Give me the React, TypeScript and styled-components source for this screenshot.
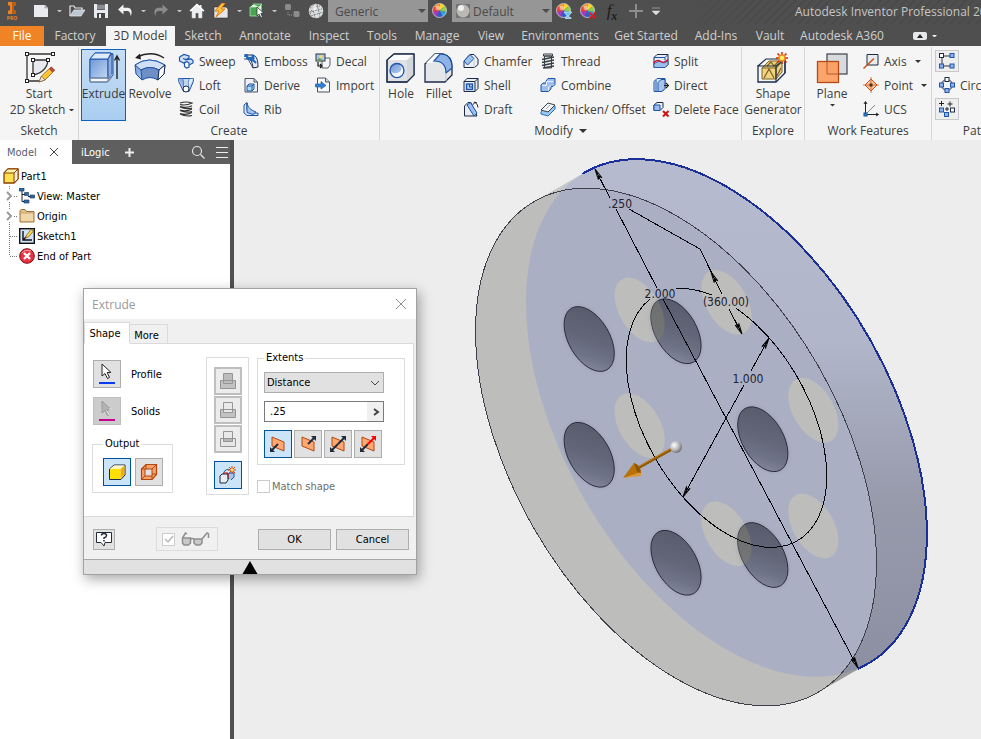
import React from "react";
import styled, { createGlobalStyle, css } from "styled-components";

const UI = `"Open Sans", "Noto Sans", sans-serif`;
const DLG = `"DejaVu Sans Condensed", "DejaVu Sans", sans-serif`;

const Global = createGlobalStyle`
  * { box-sizing: border-box; }
  html, body { margin: 0; height: 100%; overflow: hidden; }
  body { background: #ededed; font-family: ${UI}; font-size: 12px; color: #3c3c3c; }
  button, input, select { font: inherit; color: inherit; margin: 0; }
`;

/* ---------- icons ---------- */

const N = "#1b2b4a";
const B = "#1d55a8";
const art: Record<string, React.ReactNode> = {
  newDoc: (
    <g>
      <path d="M1 2h11l3 3v9H1z" fill="#e9ebee" />
      <path d="M12 2v3h3" fill="#b9bec6" stroke="#8b9098" strokeWidth=".6" />
    </g>
  ),
  open: (
    <g>
      <path d="M1 13V3h4l1 2h7v2" fill="none" stroke="#e6e6e6" strokeWidth="1.2" />
      <path d="M1 13 5 7h11l-4 6z" fill="#bcc7d4" stroke="#eee" strokeWidth=".7" />
    </g>
  ),
  save: (
    <g>
      <path d="M1 1h14v14H2l-1-1z" fill="#e8eaee" />
      <path d="M4 1h8v6H4z" fill="#5c6066" />
      <path d="M4 3h8M4 5h8" stroke="#cfd4da" strokeWidth=".8" />
      <path d="M4 10h8v5H4z" fill="#444" />
      <path d="M6 11h2v4H6z" fill="#eee" />
    </g>
  ),
  undo: (
    <path d="M1 6.500 6.500 1.500v3.200H10c3.500 0 5 2 4.500 6.300L13.500 13c0-3.500-1-5-4-5h-3v3.500z" fill="#f0f0f0" />
  ),
  redo: (
    <path d="M15 6.500 9.500 1.500v3.200H6c-3.500 0-5 2-4.500 6.300L2.500 13c0-3.500 1-5 4-5h3v3.500z" fill="#8a8a8a" />
  ),
  home: (
    <g>
      <path d="M8 1 15 8h-2v7H9.500v-5h-3v5H3V8H1z" fill="#eceef0" stroke="#cfd3d8" strokeWidth=".5" />
      <path d="M11.500 2v3" stroke="#eee" strokeWidth="2" />
      <path d="M1 8 8 1.500 15 8" fill="none" stroke="#fff" strokeWidth="1.300" />
    </g>
  ),
  update: (
    <g>
      <path d="M1 4h12l2 2v9H1z" fill="#e4e6ea" stroke="#333" strokeWidth=".6" />
      <path d="M9 0 2 8h4l-3 6 9-8H8l4-6z" fill="#ffc83c" stroke="#e8760c" />
    </g>
  ),
  pick: (
    <g>
      <path d="M1 4 4 1h9v9l-3 3H1z" fill="#dff0dc" stroke="#2c6e33" />
      <path d="M1 4h8v9H1zM4 1h9l-3 3" fill="#4aa350" stroke="#d9efd9" strokeWidth=".6" />
      <path d="M8 4v9l2-2 2 4 1.500-.7-1.700-4h3z" fill="#fff" stroke="#222" strokeWidth=".7" />
    </g>
  ),
  linked: (
    <g fill="#8b8b8b">
      <rect x="1" y="1" width="6" height="6" rx="1.500" />
      <rect x="9.500" y="8" width="6" height="6" rx="1.500" />
      <path d="M4 9v3h4" fill="none" stroke="#999" strokeDasharray="1 1" />
    </g>
  ),
  globe: (
    <g>
      <circle cx="8" cy="8" r="7.300" fill="#dcdfe0" />
      <path d="M2 5 12 3M1 9l13-3M3 13 15 9M4 2l3 13M9 1l3 13M6 1 2 12" stroke="#6b6f73" strokeWidth=".8" strokeDasharray="2 1" fill="none" />
      <circle cx="6" cy="5" r="2.500" fill="#fff" opacity=".6" />
    </g>
  ),
  plus: <path d="M8 1v14M1 8h14" stroke="#8d8d8d" strokeWidth="2" />,
  sweep: (
    <g stroke={B} strokeWidth="1.200" fill="#cfe0f6">
      <path d="M1.500 4 6 1.500l5 1.500v2L7 7l6-1 2 1.500v2.500l-4 2" />
      <path d="M1.500 4v4l4 2 2-1M5 5.500l3 1" />
      <path d="M6.500 10 9 8.500l2 1.500v4L8.500 15l-2-1.500z" fill="#fff" />
    </g>
  ),
  loft: (
    <g>
      <path d="M.7 1.500h14.600v3L11 14.500H5.500L.7 4.500z" fill="#c4d8f2" stroke={B} />
      <path d="M.7 1.500h4l1 4-.5 5" fill="#8fb0e0" stroke={B} strokeWidth=".6" />
      <path d="M15.300 1.500h-4l-1 4 .5 5" fill="#e4eefb" stroke={B} strokeWidth=".6" />
      <circle cx="8" cy="12" r="3" fill="#fff" stroke={N} />
    </g>
  ),
  coil: (
    <g fill="none" stroke="#333" strokeWidth="1.200">
      <path d="M2 2q6-2 12 0Q8 5 2 3.500M2 5.500q6 2 12-.8M2 6q6 2.500 12 1M2 9q6 2 12-1M2 9.500q6 2.500 12 1M2 12.500q6 2 12-1M2 13q6 3 12 1.500" />
    </g>
  ),
  emboss: (
    <g>
      <path d="M4 2h6c4 1 5 6 5 12l-5 1C9 8 8 6 4 6z" fill="#e4ecf7" stroke={N} />
      <path d="M1 6h4l5 9" fill="none" stroke={N} strokeWidth=".8" />
      <path d="M1.500 1h3l1 3h3V2h3v4L9 9 6 7H4L3 4H1z" fill="#2366bd" />
      <path d="M10 7l3 3" stroke="#2366bd" strokeWidth="2" />
    </g>
  ),
  derive: (
    <g>
      <path d="M2 1.500h9l3.500 3.500v10H2z" fill="#eef0f3" stroke="#4b5563" />
      <path d="M11 1.500V5h3.500" fill="none" stroke="#4b5563" />
      <path d="M4 9l2-2h5v5l-2 2H4z" fill="#b5dcf8" stroke={B} />
      <path d="M4 9h5v5M9 9l2-2" fill="none" stroke={B} />
    </g>
  ),
  rib: (
    <g>
      <path d="M1 4 4 1.500V9l5 3h6v2.500H4L1 12z" fill="#dbe7f8" stroke={B} />
      <path d="M4 2c1 5 4 7 9 9l-3 2.500-6-2z" fill="#a6c3ec" stroke={B} />
    </g>
  ),
  decal: (
    <g>
      <path d="M7 8l3-3h5v7l-2 3H7z" fill="#f4f5f7" stroke="#555e6b" />
      <rect x="1" y="1" width="9" height="7" fill="#a8c8ef" stroke="#334" />
      <path d="M1.500 7.500 4 5l2 1 3 1.500z" fill="#6ea34a" />
      <circle cx="6" cy="3.500" r="1.500" fill="#f4df48" />
      <path d="M3 9v4h3M5 11l2 2-2 2" fill="none" stroke="#111" strokeWidth="1.200" />
    </g>
  ),
  import: (
    <g>
      <path d="M2.500 1h8l4 4v10h-12z" fill="#f7f8fa" stroke="#4b5563" />
      <path d="M10.500 1v4h4" fill="#cbd2db" stroke="#4b5563" />
      <path d="M.5 7H6V4.500L11 8.500 6 12V10H.5z" fill="#2f83d3" stroke="#174e91" strokeWidth=".6" />
    </g>
  ),
  chamfer: (
    <g>
      <path d="M1 8 7 1.500h4L15 6v5.500L11.500 14.500H1z" fill="#eceef1" stroke={N} />
      <path d="M1 8 7 1.500l4 4L4.500 12z" fill="#9ec0ec" stroke={B} />
      <path d="M11 5.500v9" stroke="#c7ccd4" />
    </g>
  ),
  shell: (
    <g>
      <path d="M1 4.500 4 1.500h11v10l-3 3H1z" fill="#e9ecf1" stroke={N} />
      <path d="M1 4.500h11v10M12 4.500l3-3" fill="none" stroke={N} />
      <rect x="3.500" y="7" width="6" height="5.500" fill="#a9c6f0" stroke={B} strokeWidth="1.300" />
      <path d="M6.500 7v3h3" fill="none" stroke={B} />
    </g>
  ),
  draft: (
    <g>
      <path d="M1.500 5 5 1.500h3l6 13.500H1.500z" fill="#e9edf3" stroke={N} />
      <path d="M4 4 7.500 1.500 14 12l-3 3z" fill="#9dbdec" stroke={B} />
      <path d="M12 1.500q3 1.500 3 5M10.500 3.500l1-2.500 2.500 1" fill="none" stroke="#222" />
    </g>
  ),
  thread: (
    <g>
      <path d="M3.500 1h9v2h-9zM4.500 3h7v12h-7z" fill="#eceef0" stroke="#3a3f46" />
      <path d="M2 6.500 14 4M2 9.500 14 7M2 12.500 14 10M3 15l11-2" stroke="#3a3f46" strokeWidth="1.300" />
    </g>
  ),
  combine: (
    <g stroke={B}>
      <path d="M6 4l2-2.500h7v6L13 9.500h-2V12l-2.500 2.500H1V8l2-2h3z" fill="#9dbdec" />
      <path d="M2 8.500h4.500V4.500H13M8.500 13.500V10l2.500-1" fill="none" stroke="#e6effb" />
    </g>
  ),
  thicken: (
    <g>
      <path d="M1 11 8 3l7 2v3L8 15l-7-2z" fill="#9cc9f1" stroke="#2a6cb8" />
      <path d="M1 9 8 2l7 2-7 7z" fill="#f3f4f5" stroke="#3a3f46" />
      <path d="M6 8 10 4" stroke="#aab" />
    </g>
  ),
  split: (
    <g>
      <path d="M1 4.500 4 1.500h11v10l-3 3H1z" fill="#e8ecf2" stroke={N} />
      <path d="M1 4.500h11l3-3M12 4.500v3" fill="none" stroke={B} />
      <path d="M1 10.500V14.500h11l3-3V8l-4 2-4-2z" fill="#9dbdea" stroke={B} strokeWidth=".8" />
      <path d="M.5 10q3.500-4 7-1.500t7.500-2" fill="none" stroke="#c8102e" strokeWidth="1.300" />
    </g>
  ),
  direct: (
    <g>
      <path d="M1 4.500 4 1.500h8v10l-3 3H1z" fill="#dbe6f6" stroke={B} />
      <path d="M5 5.500 8 2.500h4v9l-3 3H5z" fill="#a6c3ec" stroke={B} />
      <path d="M3 3v11" stroke={B} />
      <path d="M11 8.500h4M13 6l2.500 2.500L13 11" fill="none" stroke="#222" strokeWidth="1.200" />
    </g>
  ),
  deleteFace: (
    <g>
      <path d="M1 4 4 1.500h6v5L7 9.500H1z" fill="#eef1f5" stroke={N} />
      <path d="M1 4h6v5.500H1z" fill="#9dbdec" stroke={B} />
      <path d="m10 10 5.500 5.500M15.500 10 10 15.500" stroke="#cf1212" strokeWidth="2" />
    </g>
  ),
  axis: (
    <g>
      <path d="M4 1.500h11V12H4z" fill="#e9ebee" stroke={N} />
      <path d="M.5 15.500 11 5.500" stroke="#c8541c" strokeWidth="1.500" />
    </g>
  ),
  point: (
    <g>
      <path d="m8 2 6 6-6 6-6-6z" fill="#ffc9a0" stroke="#c8541c" />
      <path d="M8 0v16M0 8h16" stroke="#c8541c" strokeWidth=".8" />
      <rect x="6.500" y="6.500" width="3" height="3" fill="#5a2a12" />
    </g>
  ),
  ucs: (
    <g fill="none">
      <path d="M2.500 1v12.500H15" stroke="#222" />
      <path d="M1 3l1.500-2.500L4 3M13 12l2.500 1.500L13 15" stroke="#222" />
      <path d="M3 13 12 4" stroke="#888" />
      <rect x="1" y="12" width="3" height="3" fill="#2a8de0" stroke="#124f98" />
    </g>
  ),
  patRect: (
    <g>
      <path d="M3 3h10M3 3v10h10" fill="none" stroke="#333" />
      <rect x=".5" y=".5" width="4" height="4" fill="#fff" stroke={N} />
      {[[11, 0.5], [0.5, 11], [11, 11]].map(([x, y]) => (
        <rect key={`${x}${y}`} x={x} y={y} width="4" height="4" fill="#8db4ee" stroke={B} />
      ))}
    </g>
  ),
  patCirc: (
    <g>
      <circle cx="8" cy="8" r="5.500" fill="none" stroke="#333" />
      <rect x="6" y=".5" width="4" height="4" fill="#fff" stroke={N} />
      {[[0.5, 6], [11.500, 6], [6, 11.500]].map(([x, y]) => (
        <rect key={`${x}${y}`} x={x} y={y} width="4" height="4" fill="#8db4ee" stroke={B} />
      ))}
    </g>
  ),
  patSketch: (
    <g>
      <path d="M2.500 0v5M0 2.500h5M11 .5v5M8.500 3h5M8 6v4M6 8h4" stroke="#222" />
      <rect x=".5" y="7" width="4" height="4" fill="#8db4ee" stroke={B} />
      <rect x="11.500" y="7" width="4" height="4" fill="#fff" stroke={N} />
      <rect x="5.500" y="11.500" width="4" height="4" fill="#8db4ee" stroke={B} />
    </g>
  ),
  part: (
    <g>
      <path d="M1 5 5 1h10v10l-4 4H1z" fill="#ffe24d" stroke="#8a3f06" strokeWidth="1.300" />
      <path d="M1 5h10l4-4H5z" fill="#fff3a6" stroke="#8a3f06" />
      <path d="M11 5v10l4-4V1z" fill="#f5ead0" stroke="#8a3f06" />
    </g>
  ),
  views: (
    <g>
      <path d="M3 3v10.500h4M3 6.500h5M9 8.500h6" fill="none" stroke="#222" />
      <path d="M0 0h5v3H0zM5 12h5v3H5zM5.500 4.500h4v3h-4zM11 7h4.500v3H11z" fill="#2a6cb0" stroke="#16324f" strokeWidth=".6" />
    </g>
  ),
  folder: (
    <g>
      <path d="M1 13V2.500L2.500 1.500H6L7.500 3.500H15V14H1z" fill="#e3c088" stroke="#9c7238" />
      <path d="M1.500 5h13v8.500h-13z" fill="#f0d7aa" stroke="#b68c50" strokeWidth=".6" />
    </g>
  ),
  sketch: (
    <g>
      <rect x=".7" y=".7" width="14.600" height="14.600" fill="#cfe3fa" stroke="#111" strokeWidth="1.400" />
      <path d="M4 3v9h9M4 12l5-5" fill="none" stroke="#111" strokeWidth="1.400" />
      <path d="m7 8 5-6.500L14.500 3 9.500 9l-3 1z" fill="#ffd84d" stroke="#775009" strokeWidth=".7" />
    </g>
  ),
  end: (
    <g>
      <circle cx="8" cy="8" r="7.300" fill="#ea3340" stroke="#7d0e16" />
      <path d="m5 5 6 6M11 5l-6 6" stroke="#fff" strokeWidth="2.300" />
      <path d="M3 5q3-4 9-2" stroke="#f9a9ae" fill="none" />
    </g>
  ),
  search: (
    <g fill="none" stroke="#e4e4e4" strokeWidth="1.200">
      <circle cx="7" cy="7" r="4.500" />
      <path d="m10.500 10.500 4 4" />
    </g>
  ),
  menu: <path d="M2 3.500h12M2 8.500h12M2 13.500h12" stroke="#eee" />,
};

const Svg16 = styled.svg<{ $s?: number }>`
  display: block;
  flex: none;
  width: ${(p) => p.$s ?? 16}px;
  height: ${(p) => p.$s ?? 16}px;
`;
const Icon = ({ name, size }: { name: string; size?: number }) => (
  <Svg16 $s={size} viewBox="0 0 16 16" aria-hidden="true">
    {art[name]}
  </Svg16>
);

const Wheel = ({ badge }: { badge?: "down" | "x" }) => (
  <Svg16 viewBox="0 0 16 16" aria-hidden="true">
    {["#f9d423", "#8ed04b", "#2fa6d8", "#3559c7", "#a23bc0", "#ee3d3d", "#f58a2a"].map((c, i) => {
      const p = (k: number) => {
        const a = ((k * 360) / 7 - 90) * (Math.PI / 180);
        return `${7.5 + 7 * Math.cos(a)} ${7.5 + 7 * Math.sin(a)}`;
      };
      return <path key={c} d={`M7.500 7.500L${p(i)}A7 7 0 0 1 ${p(i + 1)}z`} fill={c} />;
    })}
    <circle cx="7.500" cy="7.500" r="7" fill="none" stroke="#e8e8e8" strokeWidth=".7" />
    <circle cx="6" cy="5" r="2.500" fill="#fff" opacity=".45" />
    {badge === "down" && <path d="M8 9h8l-3 3.500v2h2v1.500H9.500v-1.500H11v-2z" fill="#6fc3ea" stroke="#fff" strokeWidth=".5" />}
    {badge === "x" && <path d="m9.500 9.500 6 6M15.500 9.500l-6 6" stroke="#e01b1b" strokeWidth="1.800" />}
  </Svg16>
);

const big: Record<string, React.ReactNode> = {
  start: (
    <g>
      <path d="M30 2H4v27h12" fill="none" stroke="#333" strokeWidth="1.300" />
      <path d="M10 8h15q-1 12-15 15z" fill="#e8eaee" stroke="#333" strokeWidth="1.300" />
      {[[4, 2], [30, 2], [4, 29], [10, 8], [25, 8], [10, 23]].map(([x, y]) => (
        <rect key={`${x}-${y}`} x={x - 1.5} y={y - 1.5} width="3" height="3" fill="#fff" stroke="#222" />
      ))}
      <path d="m16 30 2.500-6L28 15l3.500 3.500L22 28z" fill="#ffc532" stroke="#8a5a10" strokeWidth=".8" />
      <path d="m26 17 2.500-2.500 3.500 3.500-2.500 2.500z" fill="#b7483e" />
      <path d="m16 30 2.500-6 3.500 4z" fill="#fbe4bb" stroke="#555" strokeWidth=".6" />
    </g>
  ),
  extrude: (
    <g>
      <path d="M2 26V7l5-6h15l3 1v21l-6 7H2z" fill="#f5f7fa" stroke={B} />
      <path d="M2 7h18v19H2z" fill="url(#gBlue)" stroke={B} />
      <path d="M2 7 7 1h16l-3 6z" fill="#dfeafa" stroke={B} />
      <path d="M20 7l4-6v21l-4 5z" fill="#8eaede" stroke={B} />
      <path d="M2 26h18l4-4M2 26v4h18v-4M20 30l4-5" fill="none" stroke="#8a929e" />
      <path d="M29 27V5M26.500 8.500 29 4l2.500 4.500" fill="none" stroke="#222" strokeWidth="1.400" />
    </g>
  ),
  revolve: (
    <g>
      <path d="M1 13q14-10 30 0l-1 9-6 6-4-3h-9l-3 3-6-6z" fill="url(#gBlue)" stroke={B} />
      <path d="M1 13q14-10 30 0l-6 5q-9-5-18 0z" fill="#cfe0f7" stroke={B} />
      <path d="M7 18q9-5 18 0l-1 10q-8-5-16 0z" fill="#6d8fc6" stroke={B} />
      <path d="m25 18 6-5-1 9-6 6z" fill="#fff" stroke={N} />
      <path d="M30 6Q18-2 3 5" fill="none" stroke="#222" strokeWidth="1.400" />
      <path d="M6 1.500 1 6l6 1.500z" fill="#222" />
    </g>
  ),
  hole: (
    <g>
      <path d="M2 8 9 2h20v21l-7 7H2z" fill="#dfe1e5" stroke={N} />
      <path d="M2 8 9 2h20l-7 6z" fill="#fbfbfc" />
      <path d="M22 8l7-6v21l-7 7z" fill="#d3d6db" />
      <path d="M2 8 9 2h20v21l-7 7H2z" fill="none" stroke={N} strokeWidth="1.300" />
      <circle cx="12" cy="18.500" r="7" fill="url(#gBlue)" stroke={B} strokeWidth="1.300" />
      <path d="M15 13q4 6-3 8-5 1-6-3 1 7 6 7 6-1 6-6 0-4-3-6z" fill="#f3f6fb" />
    </g>
  ),
  fillet: (
    <g>
      <path d="M2 12 12 2h8q9 2 9 13v8l-7 7H2z" fill="#e4e6e9" stroke={N} strokeWidth="1.300" />
      <path d="M3 11 12 2h5L9 11z" fill="#fbfbfc" />
      <path d="M11 9 17 2q12 0 12 14l-6 5Q23 9 11 9z" fill="#8fb3e6" stroke={B} strokeWidth="1.200" />
      <path d="M23 21v8" stroke="#c5c9cf" />
    </g>
  ),
  generator: (
    <g>
      <path d="M1 13v17h18l9-9V8" fill="none" stroke={N} strokeWidth="1.300" />
      <path d="M5 16l7-7h13v11l-6 7H5z" fill="#f0d282" stroke="#7a6220" />
      <path d="M5 16h14v11M19 16l6-7M7 26l5-9 5 9M10 14l4-4 3 4 4-4M20 24l4-8" fill="none" stroke="#7a6220" strokeWidth="1.200" />
      <path d="M1 14 9 7h19M1 14h18v16M19 14l9-7v14" fill="none" stroke={N} strokeWidth="1.100" />
      <g stroke="#cf2a10" strokeWidth="1.500">
        <path d="M25 0v12M19 6h12M20.500 1.500l9 9M29.500 1.500l-9 9" />
        <circle cx="25" cy="6" r="3" fill="#fff06a" stroke="#f08a1c" />
      </g>
    </g>
  ),
  plane: (
    <g>
      <rect x="11" y="2" width="20" height="20" fill="#d7dade" stroke="#3d434b" strokeWidth="1.200" />
      <rect x="1.500" y="9.500" width="21" height="21" fill="#ff9752" fillOpacity=".85" stroke="#b54a14" strokeWidth="1.300" />
      <path d="M11 10v12h11" fill="none" stroke="#c66a38" />
    </g>
  ),
};
const BigIcon = ({ name }: { name: string }) => (
  <Svg16 $s={32} viewBox="0 0 32 32" aria-hidden="true">
    <defs>
      <linearGradient id="gBlue" x1="0" y1="0" x2="1" y2="1">
        <stop offset="0" stopColor="#6f97d6" />
        <stop offset="1" stopColor="#c3d7f4" />
      </linearGradient>
    </defs>
    {big[name]}
  </Svg16>
);

const CaretSvg = styled.svg<{ $w: number }>`
  display: block;
  flex: none;
  width: ${(p) => p.$w}px;
  height: ${(p) => p.$w / 2}px;
`;
const Caret = ({ w = 6, color = "#333" }: { w?: number; color?: string }) => (
  <CaretSvg $w={w} viewBox="0 0 8 4" aria-hidden="true">
    <path d="M0 0h8L4 4z" fill={color} />
  </CaretSvg>
);

/* ---------- frame ---------- */

const Page = styled.div`
  display: flex;
  flex-direction: column;
  height: 100vh;
  overflow: hidden;
`;

const TitleBar = styled.header`
  display: flex;
  align-items: center;
  flex: none;
  height: 24px;
  padding-bottom: 2px;
  white-space: nowrap;
  overflow: hidden;
  background:
    linear-gradient(90deg, #4f4f4f 680px, transparent 760px),
    repeating-linear-gradient(135deg, #4f4f4f 0 4px, #4a4a4a 4px 6px);
`;
const Logo = styled.div`
  display: flex;
  flex: none;
  width: 29px;
  padding-left: 3px;
`;
const QatButton = styled.button<{ $w?: number }>`
  display: flex;
  align-items: center;
  justify-content: center;
  flex: none;
  width: ${(p) => p.$w ?? 24}px;
  height: 22px;
  padding: 0;
  border: 0;
  background: none;
`;
const Fx = styled.span`
  font: italic 17px/20px "Liberation Serif", serif;
  color: #1c1c1c;
  sub { font-size: 12px; line-height: 1px; font-weight: bold; }
`;
const Combo = styled.label`
  display: grid;
  align-items: center;
  flex: none;
  width: 100px;
  height: 22px;
  background: #969696;
  > * { grid-area: 1 / 1; }
  > svg:last-child { justify-self: end; margin-right: 2px; }
  > svg:first-child { margin-left: 4px; z-index: 1; }
`;
const ComboSelect = styled.select<{ $indent?: boolean }>`
  appearance: none;
  width: 100%;
  height: 22px;
  padding: 0 0 0 ${(p) => (p.$indent ? 21 : 7)}px;
  border: 0;
  background: none;
  color: #4a4a4a;
`;
const AppTitle = styled.h1`
  flex: none;
  margin: 0 0 0 131px;
  padding-top: 2px;
  font-size: 12px;
  line-height: 18px;
  font-weight: 400;
  color: #c6c6c6;
`;

const TabBar = styled.nav`
  display: flex;
  align-items: stretch;
  flex: none;
  height: 22px;
  padding-top: 2px;
  background: #4f4f4f;
  white-space: nowrap;
`;
const RibbonTab = styled.button<{ $w: number; $kind?: "file" | "active" }>`
  flex: none;
  width: ${(p) => p.$w}px;
  padding: 0;
  border: 0;
  background: none;
  line-height: 20px;
  color: #d0d0d0;
  ${(p) => p.$kind === "file" && css`background: #f08326; color: #fff;`}
  ${(p) => p.$kind === "active" && css`background: #f5f5f5; color: #3c3c3c;`}
`;
const Minimise = styled.button`
  display: flex;
  align-items: center;
  gap: 5px;
  margin-left: 22px;
  padding: 0;
  border: 0;
  background: none;
`;

/* ---------- ribbon ---------- */

const Ribbon = styled.div`
  display: flex;
  flex: none;
  height: 94px;
  padding-top: 1px;
  overflow: hidden;
  background: #f5f5f5;
`;
const Panel = styled.section<{ $w: number }>`
  display: flex;
  flex-direction: column;
  flex: none;
  width: ${(p) => p.$w}px;
  padding-top: 2px;
  border-right: 1px solid #d6d6d6;
`;
const Tools = styled.div<{ $pad?: number }>`
  display: flex;
  height: 72px;
  padding-left: ${(p) => p.$pad ?? 2}px;
`;
const PanelName = styled.div`
  display: flex;
  align-items: center;
  justify-content: center;
  gap: 6px;
  height: 19px;
`;
const BigButton = styled.button<{ $w: number; $on?: boolean }>`
  display: flex;
  flex-direction: column;
  align-items: center;
  flex: none;
  width: ${(p) => p.$w}px;
  height: 72px;
  padding: 2px 0 0;
  border: 1px solid ${(p) => (p.$on ? "#0a62c4" : "transparent")};
  background: ${(p) => (p.$on ? "linear-gradient(#c6ddf5, #aacef1)" : "none")};
  line-height: 16px;
  white-space: nowrap;
  > svg:first-child { margin-bottom: 2px; }
  > svg:last-child:not(:first-child) { margin-top: 2px; }
`;
const SplitRow = styled.span`
  display: flex;
  align-items: center;
  gap: 4px;
  margin-right: -6px;
`;
const Col = styled.div<{ $w: number }>`
  flex: none;
  width: ${(p) => p.$w}px;
`;
const ToolButton = styled.button`
  display: flex;
  align-items: center;
  gap: 5px;
  height: 24px;
  padding: 0;
  border: 0;
  background: none;
  white-space: nowrap;
  > svg:last-child:not(:first-child) { margin-left: 3px; }
`;
const PatternButton = styled(ToolButton)<{ $boxed?: boolean }>`
  height: ${(p) => (p.$boxed ? 22 : 24)}px;
  margin: ${(p) => (p.$boxed ? "1px 0" : "0")};
  padding: 0 3px;
  border: 1px solid ${(p) => (p.$boxed ? "#c8c8c8" : "transparent")};
  background: ${(p) => (p.$boxed ? "#eeeeee" : "none")};
`;
const Tool = ({ icon, label, caret }: { icon: string; label: string; caret?: boolean }) => (
  <ToolButton>
    <Icon name={icon} />
    {label}
    {caret && <Caret />}
  </ToolButton>
);

/* ---------- browser ---------- */

const Work = styled.main`
  display: flex;
  flex: 1;
  min-height: 0;
`;
const Browser = styled.aside`
  flex: none;
  width: 234px;
  border-right: 4px solid #505050;
  background: #fff;
  font-family: ${DLG};
  font-size: 11px;
  color: #000;
`;
const BrowserTabs = styled.div`
  display: flex;
  align-items: center;
  height: 24px;
  background: #5f5f5f;
  color: #fff;
`;
const ModelTab = styled.div`
  display: flex;
  align-items: center;
  justify-content: space-between;
  flex: none;
  width: 72px;
  height: 24px;
  padding: 0 13px 0 7px;
  background: #fff;
  color: #5a5f70;
`;
const PlainButton = styled.button<{ $ml?: number }>`
  display: flex;
  align-items: center;
  flex: none;
  margin-left: ${(p) => p.$ml ?? 0}px;
  padding: 0;
  border: 0;
  background: none;
`;
const Tree = styled.ul`
  margin: 0;
  padding: 2px 0 0 3px;
  list-style: none;
`;
const TreeRow = styled.li<{ $child?: boolean; $last?: boolean }>`
  display: flex;
  align-items: center;
  gap: 2px;
  height: 20px;
`;
const BranchSvg = styled.svg`
  display: block;
  width: 14px;
  height: 20px;
`;
const Branch = ({ open, last }: { open?: boolean; last?: boolean }) => (
  <BranchSvg viewBox="0 0 14 20" aria-hidden="true">
    <path d={last ? "M6.500 0v10" : "M6.500 0v20"} stroke="#777" strokeDasharray="1 1" />
    <path d="M7 10.500h7" stroke="#777" strokeDasharray="1 1" />
    {open && (
      <g>
        <path d="M2 4h8v12H2z" fill="#fff" />
        <path d="m4 6 4 4-4 4" fill="none" stroke="#9a9a9a" strokeWidth="2" />
      </g>
    )}
  </BranchSvg>
);

/* ---------- model view ---------- */

const View = styled.div`
  flex: 1;
  min-width: 0;
  background: #ededed;
`;
const Scene = styled.svg`
  display: block;
  width: 100%;
  height: 100%;
  text { font: 12px ${DLG}; fill: #1d2030; text-anchor: middle; }
`;

type Pt = [number, number];
const R = 231.5;
const FRONT: Pt = [676, 447];
const BACK: Pt = [726.5, 418];
const iso = (c: Pt, r: number, deg: number): Pt => {
  const t = (deg * Math.PI) / 180;
  return [c[0] + 0.866 * r * Math.sin(t), c[1] + 0.5 * r * Math.sin(t) - r * Math.cos(t)];
};
const arc = (c: Pt, r: number, a: number, b: number) => {
  const p = iso(c, r, a);
  const q = iso(c, r, b);
  return `M${p}A${r * 1.2247} ${r * 0.7071} 60 ${Math.abs(b - a) > 180 ? 1 : 0} ${b > a ? 1 : 0} ${q}`;
};
const Disc = ({ c, r, ...rest }: { c: Pt; r: number } & React.SVGProps<SVGEllipseElement>) => (
  <ellipse rx={r * 1.2247} ry={r * 0.7071} transform={`translate(${c}) rotate(60)`} {...rest} />
);
const ANGLES = [0, 60, 120, 180, 240, 300];

const Head = ({ at, deg }: { at: Pt; deg: number }) => (
  <path d="M0 0-11 2-8 0-11-2z" transform={`translate(${at}) rotate(${deg})`} fill="none" stroke="#000" />
);

const Model = () => (
  <Scene role="img" aria-label="Extruded disc with six holes">
    <defs>
      <linearGradient id="rim" x1="0" y1="0" x2="0" y2="1">
        <stop offset="0" stopColor="#b5bacf" />
        <stop offset=".35" stopColor="#b1b6ca" />
        <stop offset=".65" stopColor="#979bac" />
        <stop offset="1" stopColor="#8b8fa1" />
      </linearGradient>
      <linearGradient id="side" x1="0" y1="0" x2="0" y2="1">
        <stop offset="0" stopColor="#c8c8c7" />
        <stop offset="1" stopColor="#9b9b99" />
      </linearGradient>
      <linearGradient id="bore" gradientUnits="userSpaceOnUse" x1="8" y1="-26" x2="-10" y2="30">
        <stop offset="0" stopColor="#585c6d" />
        <stop offset=".45" stopColor="#626678" />
        <stop offset=".75" stopColor="#6f7387" />
        <stop offset="1" stopColor="#868aa0" />
      </linearGradient>
      <filter id="soft" x="-20%" y="-20%" width="140%" height="140%">
        <feGaussianBlur stdDeviation="2" />
      </filter>
      <radialGradient id="ball" cx=".35" cy=".35" r=".7">
        <stop offset="0" stopColor="#fff" />
        <stop offset=".6" stopColor="#b4b4b8" />
        <stop offset="1" stopColor="#6c6c70" />
      </radialGradient>
      <clipPath id="inBack"><Disc c={BACK} r={R} /></clipPath>
      <clipPath id="inHoles">
        {ANGLES.map((a) => <Disc key={a} c={iso(FRONT, R / 2, a)} r={29} />)}
      </clipPath>
    </defs>
    <g transform="translate(-234 -140)">
      <path
        d={`M${iso(FRONT, R, -45)}L${iso(BACK, R, -45)}L${iso(BACK, R, 135)}L${iso(FRONT, R, 135)}z`}
        fill="url(#side)"
      />
      <path d={`${arc(BACK, R, -45, 135)}${arc(BACK, R, 135, 315)}`} fill="url(#rim)" />
      <Disc c={FRONT} r={R} fill="#bdbdbb" />
      <g clipPath="url(#inBack)">
        <Disc c={FRONT} r={R} fill="#abafc3" />
      </g>
      {ANGLES.map((a) => <Disc key={a} c={iso(BACK, R / 2, a)} r={29} fill="#bdbdbb" />)}
      {ANGLES.map((a) => {
        const [x, y] = iso(FRONT, R / 2, a);
        return (
          <g key={a} transform={`translate(${x} ${y})`}>
            <Disc c={[0, 0]} r={29} fill="#8b8fa4" opacity=".7" filter="url(#soft)" />
            <path d={`${arc([0, 0], 29, -45, 135)}${arc([0, 0], 29, 135, 315)}`} fill="url(#bore)" stroke="#2a2d3c" />
          </g>
        );
      })}
      <g clipPath="url(#inHoles)">
        {ANGLES.map((a) => <Disc key={a} c={iso(BACK, R / 2, a)} r={29} fill="#7a7a70" fillOpacity=".65" />)}
      </g>
      <Disc c={FRONT} r={R} fill="none" stroke="#3d3f49" shapeRendering="crispEdges" />
      <path d={arc(BACK, R, -46, 139)} fill="none" stroke="#1a2f9c" strokeWidth="2" shapeRendering="crispEdges" />
      <g fill="none" stroke="#05060c" shapeRendering="crispEdges">
        <path d={arc(BACK, R / 2, 5.5, 310)} />
        <path d={arc(BACK, R / 2, -30, -8)} />
        <path d="M595 169l15 29M616 209l41 79M663 299 858 668" />
        <path d="M629 209l71 40 22 45M729 309l13 25" />
        <path d="M769 338 751 371M744 385 683 497" />
      </g>
      <Head at={[595, 169]} deg={-118} />
      <Head at={[858, 668]} deg={62} />
      <Head at={[711, 272]} deg={-117} />
      <Head at={[742, 334]} deg={63} />
      <Head at={[769, 338]} deg={-61} />
      <Head at={[683, 497]} deg={119} />
      <path d="M672 449 638 468" stroke="#8f5604" strokeWidth="3" />
      <path d="M672 448 638 467" stroke="#c8800f" />
      <path d="M623 478 634 463Q641 465 641 474z" fill="#b97205" />
      <path d="m623 478 18-6v4z" fill="#d9983a" />
      <path d="M634 463q6 2 7 10l-4-1z" fill="#8f5604" />
      <circle cx="676" cy="447" r="6" fill="url(#ball)" />
      <text x="620" y="208">.250</text>
      <text x="660" y="298">2.000</text>
      <text x="726" y="306">(360.00)</text>
      <text x="748" y="383">1.000</text>
    </g>
  </Scene>
);

/* ---------- extrude dialog ---------- */

const Dialog = styled.section`
  position: absolute;
  left: 83px;
  top: 288px;
  width: 334px;
  border: 1px solid #a2a2a2;
  background: #f0f0f0;
  box-shadow: 2px 4px 12px rgba(0, 0, 0, 0.35);
  font-family: ${DLG};
  font-size: 11px;
  color: #000;
`;
const DialogTitle = styled.header`
  display: flex;
  align-items: center;
  justify-content: space-between;
  height: 30px;
  padding: 0 9px 0 8px;
  background: #fff;
  font-family: ${UI};
  font-size: 12px;
  color: #9a9a9a;
`;
const DialogTabs = styled.div`
  display: flex;
  align-items: flex-end;
  height: 25px;
  margin-bottom: -1px;
`;
const DialogTab = styled.button<{ $on?: boolean }>`
  height: ${(p) => (p.$on ? 22 : 20)}px;
  width: ${(p) => (p.$on ? 46 : 38)}px;
  padding: ${(p) => (p.$on ? "0" : "2px")} 4px 0 0;
  border: 1px solid #dadada;
  border-left-width: ${(p) => (p.$on ? 1 : 0)}px;
  border-bottom-color: ${(p) => (p.$on ? "#fff" : "#dadada")};
  background: ${(p) => (p.$on ? "#fff" : "#f0f0f0")};
`;
const Sheet = styled.div`
  display: flex;
  align-items: flex-start;
  height: 174px;
  margin-right: 2px;
  padding: 13px 0 0 8px;
  border: 1px solid #dadada;
  border-left: 0;
  background: #fff;
`;
const SideCol = styled.div`
  width: 81px;
`;
const Pick = styled.div`
  display: flex;
  align-items: center;
  gap: 10px;
  margin: 3px 0 9px 1px;
`;
const Square = styled.button<{ $on?: boolean; $dim?: boolean; $flat?: boolean }>`
  display: flex;
  align-items: center;
  justify-content: center;
  flex: none;
  width: 28px;
  height: 28px;
  padding: 0;
  border: 1px solid ${(p) => (p.$on ? "#00549e" : p.$dim || p.$flat ? "#bfbfbf" : "#adadad")};
  background: ${(p) => (p.$on ? "#cce4f7" : p.$dim ? "#cccccc" : "#e1e1e1")};
  ${(p) => p.$flat && css`border-width: 2px; background: #ececec;`}
`;
const Group = styled.fieldset<{ $h: number; $mt?: number; $pad: string }>`
  min-width: 0;
  height: ${(p) => p.$h}px;
  margin: ${(p) => p.$mt ?? 0}px 0 0;
  padding: ${(p) => p.$pad};
  border: 1px solid #dcdcdc;
  legend { padding: 0 2px; line-height: 14px; }
`;
const Row = styled.div<{ $gap: number }>`
  display: flex;
  align-items: center;
  gap: ${(p) => p.$gap}px;
`;
const Booleans = styled.div`
  display: flex;
  flex-direction: column;
  align-items: center;
  gap: 1px;
  width: 43px;
  height: 138px;
  margin-left: 33px;
  padding-top: 9px;
  border: 1px solid #dcdcdc;
  ${Square}:last-child { margin-top: 7px; }
`;
const Extents = styled.div`
  width: 148px;
  margin: -6px 0 0 8px;
`;
const Field = styled.label`
  display: grid;
  align-items: center;
  width: 120px;
  height: 21px;
  margin-bottom: 8px;
  > * { grid-area: 1 / 1; }
  > svg { justify-self: end; margin-right: 4px; }
`;
const fieldBox = css`
  appearance: none;
  width: 100%;
  height: 21px;
  padding: 0 2px;
  border: 1px solid #adadad;
  border-radius: 0;
  background: #e1e1e1;
`;
const DropDown = styled.select`${fieldBox}`;
const Value = styled.input`
  ${fieldBox}
  padding-left: 5px;
  border-color: #7a7a7a;
  background: linear-gradient(90deg, #fff 102px, #f0f0f0 102px);
`;
const Check = styled.input`
  appearance: none;
  width: 13px;
  height: 13px;
  margin: 0;
  border: 1px solid #cccccc;
  background: #fff;
`;
const Match = styled.label`
  display: flex;
  align-items: center;
  gap: 2px;
  margin-top: 15px;
  color: #6d6d6d;
`;
const Footer = styled.footer`
  display: flex;
  align-items: center;
  height: 42px;
  padding: 2px 7px 0 9px;
`;
const PushButton = styled.button<{ $w: number; $ml?: number }>`
  display: flex;
  align-items: center;
  justify-content: center;
  width: ${(p) => p.$w}px;
  height: 21px;
  margin-left: ${(p) => p.$ml ?? 0}px;
  padding: 0;
  border: 1px solid #adadad;
  background: #e1e1e1;
`;
const Preview = styled.label`
  display: flex;
  align-items: center;
  gap: 6px;
  width: 62px;
  height: 24px;
  margin-left: 41px;
  padding-left: 5px;
  border: 1px solid #dcdcdc;
`;
const CheckStack = styled.span`
  display: grid;
  > * { grid-area: 1 / 1; }
  > svg { pointer-events: none; }
`;
const Grip = styled.div`
  display: flex;
  justify-content: center;
  height: 15px;
  border-top: 1px solid #a8a8a8;
  background: #e1e1e1;
`;
const Drawing = styled.svg<{ $w: number; $h: number }>`
  display: block;
  flex: none;
  width: ${(p) => p.$w}px;
  height: ${(p) => p.$h}px;
`;

const Cursor = ({ line, dim }: { line: string; dim?: boolean }) => (
  <Drawing $w={18} $h={22} viewBox="0 0 18 22" aria-hidden="true">
    <path d="M4 1v12l3-2.500 2.500 5 2-1-2.300-5H13z" fill={dim ? "#b4b4b4" : "#fff"} stroke={dim ? "#9a9a9a" : "#222"} />
    {dim && <path d="M9 11l2.500 4M11 9h2.500" stroke="#f4f4f4" />}
    <path d="M1 20h16" stroke={line} strokeWidth="2" />
  </Drawing>
);
const Bool = ({ mode }: { mode: number }) => (
  <Drawing $w={16} $h={16} viewBox="0 0 16 16" aria-hidden="true">
    <path d="M.5 7.500h15v8H.5z" fill={mode === 2 ? "#e6e6e6" : "#c2c2c2"} stroke="#959595" />
    <path d="M3.500.500h9v10h-9z" fill={mode === 0 ? "#bdbdbd" : "#e9e9e9"} stroke="#959595" />
    <path d="M3.500 7.500h9" stroke="#959595" />
    {mode === 2 && <path d="M4 8h8v2H4z" fill="#b5b5b5" />}
  </Drawing>
);
const NewSolid = () => (
  <Drawing $w={18} $h={18} viewBox="0 0 18 18" aria-hidden="true">
    <circle cx="9" cy="8" r="4.500" fill="#d7e5f8" stroke={B} />
    <path d="M8 9l3-2h4v4l-3 3" fill="#a8c5ee" stroke={B} />
    <path d="M1 10 3 8h6v6l-2 3H1z" fill="#e9ebee" stroke={N} />
    <path d="M5 7h4v5" fill="none" stroke="#c00" />
    <path d="M13 0v8M9 4h8M10 1l6 6M16 1l-6 6" stroke="#e0420e" />
    <circle cx="13" cy="4" r="1.500" fill="#ffe34e" />
  </Drawing>
);
const Solid = () => (
  <Drawing $w={18} $h={18} viewBox="0 0 18 18" aria-hidden="true">
    <path d="M1.500 6 6 2h11v10l-4 4.500H1.500z" fill="#fff" stroke={N} />
    <path d="M2 6h10.500v10H2z" fill="#ffe000" />
    <path d="M2 6 6 2.500h10.500l-4 3.500z" fill="#fff8c0" />
    <path d="M12.500 6 16.500 2.500v9l-4 4.500z" fill="#efae00" />
  </Drawing>
);
const Surface = () => (
  <Drawing $w={18} $h={18} viewBox="0 0 18 18" aria-hidden="true">
    <path d="M1.500 6 6 1.500h10.500v10L12 16.500H1.500z" fill="#f6a06a" stroke="#b4470f" strokeWidth="1.200" />
    <path d="M5 6h7v7H5z" fill="#e1e1e1" stroke="#b4470f" />
    <path d="M1.500 6 5 6M12 6l4.500-4.500M12 13v3.500M6 1.500v4.500M1.500 16.500 5 13M12 11h4" stroke="#b4470f" />
  </Drawing>
);
const Direction = ({ kind }: { kind: number }) => (
  <Drawing $w={18} $h={18} viewBox="0 0 18 18" aria-hidden="true">
    <path d="M3 2l12 5v9L3 11z" fill="#ffa872" stroke="#b4470f" />
    {kind !== 1 && (
      <g>
        <path d="M3 15 9 9" stroke="#222b3a" strokeWidth="2" />
        <path d="M1 17v-5l5 5z" fill="#222b3a" />
      </g>
    )}
    {kind !== 0 && (
      <g>
        <path d="m9 9 6-6" stroke={kind === 3 ? "#f00" : "#222b3a"} strokeWidth="2" />
        <path d="M17 1v5l-5-5z" fill={kind === 3 ? "#f00" : "#222b3a"} />
      </g>
    )}
  </Drawing>
);

const ExtrudeDialog = () => (
  <Dialog role="dialog" aria-label="Extrude">
    <DialogTitle>
      Extrude
      <PlainButton aria-label="Close">
        <Drawing $w={12} $h={12} viewBox="0 0 12 12"><path d="m1 1 10 10M11 1 1 11" stroke="#8f8f8f" /></Drawing>
      </PlainButton>
    </DialogTitle>
    <DialogTabs role="tablist">
      <DialogTab $on role="tab">Shape</DialogTab>
      <DialogTab role="tab">More</DialogTab>
    </DialogTabs>
    <Sheet>
      <SideCol>
        <Pick><Square id="profile"><Cursor line="#0a3cff" /></Square><label htmlFor="profile">Profile</label></Pick>
        <Pick><Square id="solids" $dim><Cursor line="#c8008f" dim /></Square><label htmlFor="solids">Solids</label></Pick>
        <Group $h={56} $mt={12} $pad="7px 0 0 10px">
          <legend>Output</legend>
          <Row $gap={4}>
            <Square $on aria-label="Solid"><Solid /></Square>
            <Square aria-label="Surface"><Surface /></Square>
          </Row>
        </Group>
      </SideCol>
      <Booleans>
        <Square $flat aria-label="Join"><Bool mode={0} /></Square>
        <Square $flat aria-label="Cut"><Bool mode={1} /></Square>
        <Square $flat aria-label="Intersect"><Bool mode={2} /></Square>
        <Square $on aria-label="New solid"><NewSolid /></Square>
      </Booleans>
      <Extents>
        <Group $h={114} $pad="7px 0 0 6px">
          <legend>Extents</legend>
          <Field>
            <DropDown aria-label="Extents"><option>Distance</option></DropDown>
            <Drawing $w={10} $h={6} viewBox="0 0 10 6"><path d="m1 1 4 4 4-4" fill="none" stroke="#444" /></Drawing>
          </Field>
          <Field>
            <Value aria-label="Distance" defaultValue=".25" />
            <Drawing $w={8} $h={8} viewBox="0 0 8 8"><path d="m2 1 4 3-4 3" fill="none" stroke="#444" strokeWidth="2" /></Drawing>
          </Field>
          <Row $gap={2}>
            {[0, 1, 2, 3].map((k) => (
              <Square key={k} $on={k === 0} aria-label={`Direction ${k + 1}`}><Direction kind={k} /></Square>
            ))}
          </Row>
        </Group>
        <Match><Check type="checkbox" disabled />Match shape</Match>
      </Extents>
    </Sheet>
    <Footer>
      <PushButton $w={22} aria-label="Help">
        <Drawing $w={16} $h={16} viewBox="0 0 16 16">
          <path d="M.5 1.500h15v10H9L8 15l-3-3.500H.5z" fill="#fff" stroke="#222b3a" />
          <path d="M5.500 4.500q0-2 2.500-2t2.500 2Q10.500 6 8 7v1M8 9v1.500" fill="none" stroke="#222b3a" strokeWidth="1.500" />
        </Drawing>
      </PushButton>
      <Preview aria-label="Preview">
        <CheckStack>
          <Check type="checkbox" defaultChecked disabled />
          <Drawing $w={13} $h={13} viewBox="0 0 13 13"><path d="m3 6 3 3 5-6" fill="none" stroke="#b4b4b4" strokeWidth="1.400" /></Drawing>
        </CheckStack>
        <Drawing $w={29} $h={14} viewBox="0 0 29 14">
          <g fill="#c9c9c9" stroke="#8f8f8f" strokeWidth="1.500">
            <path d="M1.500 6h8v5l-2 2H3l-1.500-2zM13 7h8v4l-2 2h-4l-2-2z" />
            <path d="M9.500 7q2-1 3.500 0M1.500 6 4.500 1 6 2M21 7l5-6 1.500 1v4" fill="none" />
          </g>
        </Drawing>
      </Preview>
      <PushButton $w={73} $ml={40}>OK</PushButton>
      <PushButton $w={73} $ml={5}>Cancel</PushButton>
    </Footer>
    <Grip>
      <Drawing $w={16} $h={14} viewBox="0 0 16 14"><path d="M8 1l7.500 13H.5z" fill="#000" /></Drawing>
    </Grip>
  </Dialog>
);

/* ---------- page ---------- */

const TABS: [string, number][] = [
  ["File", 44], ["Factory", 62], ["3D Model", 69], ["Sketch", 56], ["Annotate", 68], ["Inspect", 60],
  ["Tools", 46], ["Manage", 64], ["View", 44], ["Environments", 94], ["Get Started", 78], ["Add-Ins", 62],
  ["Vault", 46], ["Autodesk A360", 98],
];

const Qat = ({ icon, label }: { icon: string; label: string }) => (
  <QatButton aria-label={label}><Icon name={icon} /></QatButton>
);
const QatCaret = ({ w = 12 }: { w?: number }) => (
  <QatButton $w={w} aria-label="More"><Caret w={5} color="#c4c4c4" /></QatButton>
);

export default function App() {
  return (
    <Page>
      <Global />
      <TitleBar>
        <Logo>
          <Drawing $w={18} $h={22} viewBox="0 0 18 22" role="img" aria-label="Inventor">
            <path d="M5 2h8v3l-2 1v4l2 1v3H5v-3l2-1V6L5 5z" fill="#e8832a" />
            <path d="M9 2h4v3l-2 1v4l2 1v3H9z" fill="#b85f17" />
            <text x="9" y="20" fontSize="5" fontWeight="700" fill="#e8832a" textAnchor="middle">PRO</text>
          </Drawing>
        </Logo>
        <Qat icon="newDoc" label="New" />
        <QatCaret />
        <Qat icon="open" label="Open" />
        <Qat icon="save" label="Save" />
        <Qat icon="undo" label="Undo" />
        <QatCaret />
        <Qat icon="redo" label="Redo" />
        <QatCaret />
        <Qat icon="home" label="Home" />
        <Qat icon="update" label="Update" />
        <QatCaret />
        <Qat icon="pick" label="Select" />
        <QatCaret w={11} />
        <Qat icon="linked" label="Return" />
        <Qat icon="globe" label="Material" />
        <Combo>
          <ComboSelect aria-label="Material"><option>Generic</option></ComboSelect>
          <Caret w={8} color="#4c4c4c" />
        </Combo>
        <QatButton aria-label="Appearance"><Wheel /></QatButton>
        <Combo>
          <Svg16 $s={14} viewBox="0 0 14 14" aria-hidden="true">
            <path d="M0 0h14v14H0z" fill="#757575" />
            <circle cx="7" cy="7" r="6.500" fill="#b9bab6" />
            <circle cx="5" cy="4" r="3" fill="#f0f0ee" />
          </Svg16>
          <ComboSelect $indent aria-label="Appearance"><option>Default</option></ComboSelect>
          <Caret w={8} color="#4c4c4c" />
        </Combo>
        <QatButton aria-label="Adjust"><Wheel badge="down" /></QatButton>
        <QatButton aria-label="Clear"><Wheel badge="x" /></QatButton>
        <QatButton aria-label="Parameters"><Fx>f<sub>x</sub></Fx></QatButton>
        <Qat icon="plus" label="Add" />
        <QatButton $w={16} aria-label="Customize">
          <Drawing $w={8} $h={8} viewBox="0 0 8 8"><path d="M0 1h8M0 4h8L4 8z" fill="#ddd" stroke="#ddd" strokeWidth=".5" /></Drawing>
        </QatButton>
        <AppTitle>Autodesk Inventor Professional 2018</AppTitle>
      </TitleBar>

      <TabBar>
        {TABS.map(([name, w]) => (
          <RibbonTab key={name} $w={w} $kind={name === "File" ? "file" : name === "3D Model" ? "active" : undefined}>
            {name}
          </RibbonTab>
        ))}
        <Minimise aria-label="Minimise ribbon">
          <Drawing $w={14} $h={8} viewBox="0 0 14 8">
            <rect width="14" height="8" rx="2" fill="#e6e8ea" />
            <path d="M4 6h6L7 2z" fill="#222" />
          </Drawing>
          <Caret w={5} color="#eee" />
        </Minimise>
      </TabBar>

      <Ribbon>
        <Panel $w={79}>
          <Tools $pad={0}>
            <BigButton $w={78}>
              <BigIcon name="start" />
              Start
              <SplitRow>2D Sketch<Caret w={5} /></SplitRow>
            </BigButton>
          </Tools>
          <PanelName>Sketch</PanelName>
        </Panel>

        <Panel $w={301}>
          <Tools>
            <BigButton $w={45} $on><BigIcon name="extrude" />Extrude</BigButton>
            <BigButton $w={48}><BigIcon name="revolve" />Revolve</BigButton>
            <Col $w={4} />
            <Col $w={65}>
              <Tool icon="sweep" label="Sweep" />
              <Tool icon="loft" label="Loft" />
              <Tool icon="coil" label="Coil" />
            </Col>
            <Col $w={72}>
              <Tool icon="emboss" label="Emboss" />
              <Tool icon="derive" label="Derive" />
              <Tool icon="rib" label="Rib" />
            </Col>
            <Col $w={62}>
              <Tool icon="decal" label="Decal" />
              <Tool icon="import" label="Import" />
            </Col>
          </Tools>
          <PanelName>Create</PanelName>
        </Panel>

        <Panel $w={362}>
          <Tools>
            <BigButton $w={38}><BigIcon name="hole" />Hole</BigButton>
            <BigButton $w={38}><BigIcon name="fillet" />Fillet</BigButton>
            <Col $w={5} />
            <Col $w={77}>
              <Tool icon="chamfer" label="Chamfer" />
              <Tool icon="shell" label="Shell" />
              <Tool icon="draft" label="Draft" />
            </Col>
            <Col $w={113}>
              <Tool icon="thread" label="Thread" />
              <Tool icon="combine" label="Combine" />
              <Tool icon="thicken" label="Thicken/ Offset" />
            </Col>
            <Col $w={85}>
              <Tool icon="split" label="Split" />
              <Tool icon="direct" label="Direct" />
              <Tool icon="deleteFace" label="Delete Face" />
            </Col>
          </Tools>
          <PanelName>Modify<Caret w={8} /></PanelName>
        </Panel>

        <Panel $w={63}>
          <Tools $pad={0}>
            <BigButton $w={62}><BigIcon name="generator" /><span>Shape</span><span>Generator</span></BigButton>
          </Tools>
          <PanelName>Explore</PanelName>
        </Panel>

        <Panel $w={127}>
          <Tools $pad={4}>
            <BigButton $w={46}><BigIcon name="plane" />Plane<Caret w={5} /></BigButton>
            <Col $w={8} />
            <Col $w={64}>
              <Tool icon="axis" label="Axis" caret />
              <Tool icon="point" label="Point" caret />
              <Tool icon="ucs" label="UCS" />
            </Col>
          </Tools>
          <PanelName>Work Features</PanelName>
        </Panel>

        <Panel $w={104}>
          <Tools $pad={3}>
            <Col $w={100}>
              <PatternButton $boxed aria-label="Rectangular"><Icon name="patRect" /></PatternButton>
              <PatternButton><Icon name="patCirc" />Circular</PatternButton>
              <PatternButton $boxed aria-label="Sketch driven"><Icon name="patSketch" /></PatternButton>
            </Col>
          </Tools>
          <PanelName>Pattern</PanelName>
        </Panel>
      </Ribbon>

      <Work>
        <Browser>
          <BrowserTabs>
            <ModelTab>
              Model
              <PlainButton aria-label="Close Model">
                <Drawing $w={10} $h={10} viewBox="0 0 10 10"><path d="m1 1 8 8M9 1 1 9" stroke="#444" /></Drawing>
              </PlainButton>
            </ModelTab>
            <PlainButton $ml={9}>iLogic</PlainButton>
            <PlainButton $ml={15} aria-label="Add tab">
              <Drawing $w={9} $h={9} viewBox="0 0 9 9"><path d="M4.500 0v9M0 4.500h9" stroke="#eee" strokeWidth="2" /></Drawing>
            </PlainButton>
            <PlainButton $ml={56} aria-label="Search"><Icon name="search" /></PlainButton>
            <PlainButton $ml={8} aria-label="Menu"><Icon name="menu" /></PlainButton>
          </BrowserTabs>
          <Tree>
            <TreeRow><Icon name="part" />Part1</TreeRow>
            <TreeRow $child><Branch open /><Icon name="views" />View: Master</TreeRow>
            <TreeRow $child><Branch open /><Icon name="folder" />Origin</TreeRow>
            <TreeRow $child><Branch /><Icon name="sketch" />Sketch1</TreeRow>
            <TreeRow $child><Branch last /><Icon name="end" />End of Part</TreeRow>
          </Tree>
        </Browser>
        <View><Model /></View>
      </Work>
      <ExtrudeDialog />
    </Page>
  );
}
